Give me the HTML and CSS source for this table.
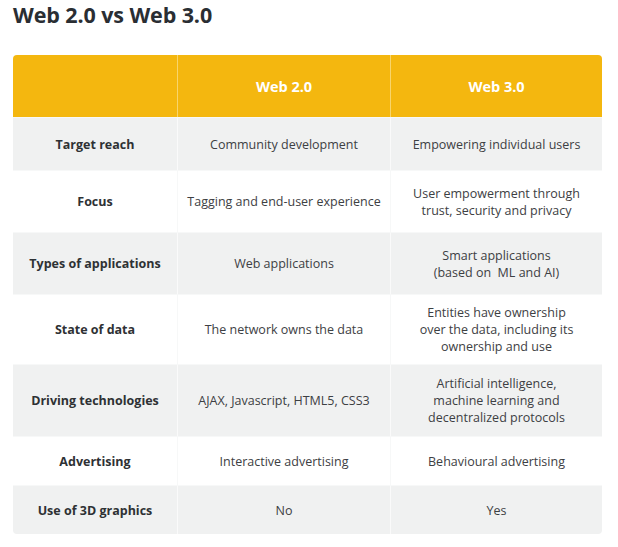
FILE: index.html
```html
<!DOCTYPE html>
<html>
<head>
<meta charset="utf-8">
<link rel="stylesheet" href="styles.css">
</head>
<body>
<div class="page">
  <h1 class="title">Web 2.0 vs Web 3.0</h1>
  <div class="table">
    <div class="row head">
      <div class="cell"></div>
      <div class="cell">Web 2.0</div>
      <div class="cell">Web 3.0</div>
    </div>
    <div class="row gray r53">
      <div class="cell label">Target reach</div>
      <div class="cell">Community development</div>
      <div class="cell">Empowering individual users</div>
    </div>
    <div class="row r62">
      <div class="cell label">Focus</div>
      <div class="cell">Tagging and end-user experience</div>
      <div class="cell">User empowerment through<br>trust, security and privacy</div>
    </div>
    <div class="row gray r62">
      <div class="cell label">Types of applications</div>
      <div class="cell">Web applications</div>
      <div class="cell">Smart applications<br>(based on&nbsp; ML and AI)</div>
    </div>
    <div class="row r70">
      <div class="cell label">State of data</div>
      <div class="cell">The network owns the data</div>
      <div class="cell">Entities have ownership<br>over the data, including its<br>ownership and use</div>
    </div>
    <div class="row gray r72">
      <div class="cell label">Driving technologies</div>
      <div class="cell">AJAX, Javascript, HTML5, CSS3</div>
      <div class="cell">Artificial intelligence,<br>machine learning and<br>decentralized protocols</div>
    </div>
    <div class="row r49">
      <div class="cell label">Advertising</div>
      <div class="cell">Interactive advertising</div>
      <div class="cell">Behavioural advertising</div>
    </div>
    <div class="row gray r49 last">
      <div class="cell label">Use of 3D graphics</div>
      <div class="cell">No</div>
      <div class="cell">Yes</div>
    </div>
  </div>
</div>
</body>
</html>
```
FILE: styles.css
```css
html, body {
  margin: 0;
  padding: 0;
  background: #ffffff;
}
.page {
  padding: 0 16px 0 13px;
  font-family: "Open Sans", "Liberation Sans", sans-serif;
  color: #3d4043;
}
.title {
  margin: 0;
  padding-top: 1px;
  font-size: 21.5px;
  font-weight: 700;
  line-height: 28px;
  color: #2a2e33;
  letter-spacing: -0.1px;
}
.table {
  margin-top: 26px;
  width: 589px;
  border-radius: 4px;
  overflow: hidden;
}
.row {
  display: grid;
  grid-template-columns: 164px 213px 212px;
  border-top: 1px solid #f7f8f8;
}
.row.head {
  border-top: none;
  height: 62px;
  background: #f4b70f;
  color: #ffffff;
  font-weight: 700;
}
.row.head .cell {
  font-size: 14.5px;
}
.row.head .cell + .cell {
  border-left: 1px solid #f8d56c;
}
.cell {
  display: flex;
  align-items: center;
  justify-content: center;
  text-align: center;
  font-size: 12.5px;
  line-height: 17px;
}
.cell + .cell {
  border-left: 1px solid #f7f8f8;
}
.gray {
  background: #f0f1f1;
}
.gray .cell + .cell {
  border-left: 1px solid #fafafa;
}
.label {
  font-weight: 700;
  color: #2e3134;
}
.r53 { height: 52px; }
.r62 { height: 61px; }
.r70 { height: 69px; }
.r72 { height: 71px; }
.r49 { height: 48px; }
```
